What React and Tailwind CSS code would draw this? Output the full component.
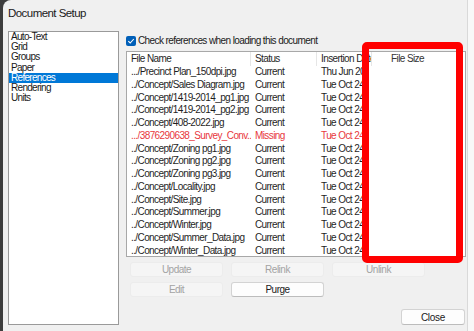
import React from "react";

const rows = [
  [".../Precinct Plan_150dpi.jpg", "Current", "Thu Jun 20"],
  ["../Concept/Sales Diagram.jpg", "Current", "Tue Oct 24"],
  ["../Concept/1419-2014_pg1.jpg", "Current", "Tue Oct 24"],
  ["../Concept/1419-2014_pg2.jpg", "Current", "Tue Oct 24"],
  ["../Concept/408-2022.jpg", "Current", "Tue Oct 24"],
  [".../3876290638_Survey_Conv...", "Missing", "Tue Oct 24", true],
  ["../Concept/Zoning pg1.jpg", "Current", "Tue Oct 24"],
  ["../Concept/Zoning pg2.jpg", "Current", "Tue Oct 24"],
  ["../Concept/Zoning pg3.jpg", "Current", "Tue Oct 24"],
  ["../Concept/Locality.jpg", "Current", "Tue Oct 24"],
  ["../Concept/Site.jpg", "Current", "Tue Oct 24"],
  ["../Concept/Summer.jpg", "Current", "Tue Oct 24"],
  ["../Concept/Winter.jpg", "Current", "Tue Oct 24"],
  ["../Concept/Summer_Data.jpg", "Current", "Tue Oct 24"],
  ["../Concept/Winter_Data.jpg", "Current", "Tue Oct 24"],
];

const pages = ["Auto-Text", "Grid", "Groups", "Paper", "References", "Rendering", "Units"];

const Btn = ({ label, enabled }) => (
  <div
    className={
      "w-[93px] h-[15px] rounded-[3px] flex items-center justify-center text-[10px] tracking-[-0.5px] " +
      (enabled
        ? "bg-[#fdfdfd] border border-[#d3d3d3] border-b-[#bcbcbc] text-[#1b1b1b]"
        : "bg-[#f5f5f5] border border-[#ececec] text-[#a3a3a3]")
    }
  >
    {label}
  </div>
);

const App = () => {
  return (
    <div
      className="relative w-[474px] h-[331px] overflow-hidden flex bg-[#3d3d3d]"
      style={{ fontFamily: '"Liberation Sans", Arial, sans-serif' }}
    >
      <div className="ml-[3px] w-[464px] h-full bg-[#f0f0f0] rounded-tl-[8px] flex flex-col">
        {/* title */}
        <div className="h-[31px] pl-[5px] pt-[6px] text-[11.5px] tracking-[-0.55px] text-[#1a1a1a] leading-[14px]">
          Document Setup
        </div>

        <div className="flex pl-[5px]">
          {/* page list */}
          <div className="w-[111px] h-[294px] bg-white border border-[#9a9a9a]">
            {pages.map((p) => (
              <div
                key={p}
                className={
                  "h-[10.2px] leading-[10.2px] pl-[2px] text-[10px] tracking-[-0.7px] " +
                  (p === "References" ? "bg-[#0078d7] text-white" : "text-[#1a1a1a]")
                }
              >
                {p}
              </div>
            ))}
          </div>

          {/* right side */}
          <div className="ml-[7px] w-[340px] h-[294px] flex flex-col">
            <div className="mt-[4px] h-[11px] flex items-center">
              <div className="w-[10px] h-[10px] rounded-[2px] bg-[#005fb8] flex items-center justify-center">
                <svg width="8" height="8" viewBox="0 0 8 8">
                  <path d="M1.3 4.2 L3.2 6 L6.8 2" fill="none" stroke="white" strokeWidth="1.1" />
                </svg>
              </div>
              <span className="ml-[2px] text-[10px] tracking-[-0.6px] text-[#1a1a1a]">
                Check references when loading this document
              </span>
            </div>

            {/* table */}
            <div className="mt-[5px] h-[206px] bg-white border border-[#a8a8a8] overflow-hidden text-[10px] tracking-[-0.6px] text-[#1f1f1f]">
              <div className="grid grid-cols-[124px_66px_55px_1fr] h-[14px] leading-[14px]">
                <div className="pl-[4px] border-r border-[#e6e6e6] whitespace-nowrap overflow-hidden">File Name</div>
                <div className="pl-[4px] border-r border-[#e6e6e6] whitespace-nowrap overflow-hidden">Status</div>
                <div className="pl-[4px] border-r border-[#e6e6e6] whitespace-nowrap overflow-hidden">Insertion Date</div>
                <div className="pl-[19px] whitespace-nowrap overflow-hidden text-[#333]">File Size</div>
              </div>
              {rows.map(([name, status, date, missing], i) => (
                <div
                  key={i}
                  className={
                    "grid grid-cols-[124px_66px_55px_1fr] h-[12.75px] leading-[12.75px] " +
                    (missing ? "text-[#e8383d]" : "")
                  }
                >
                  <div className="pl-[4px] whitespace-nowrap overflow-hidden">{name}</div>
                  <div className="pl-[4px] whitespace-nowrap overflow-hidden">{status}</div>
                  <div className="pl-[4px] whitespace-nowrap overflow-hidden">{date}</div>
                  <div></div>
                </div>
              ))}
            </div>

            {/* buttons */}
            <div className="mt-[5px] ml-[4px] flex gap-[8px]">
              <Btn label="Update" />
              <Btn label="Relink" />
              <Btn label="Unlink" />
            </div>
            <div className="mt-[5px] ml-[4px] flex gap-[8px]">
              <Btn label="Edit" />
              <Btn label="Purge" enabled />
            </div>

            <div className="mt-auto mr-[1px] flex justify-end">
              <div className="w-[64px] h-[16px] rounded-[3px] bg-[#fdfdfd] border border-[#d3d3d3] border-b-[#bcbcbc] flex items-center justify-center text-[10px] tracking-[-0.3px] text-[#1b1b1b]">
                Close
              </div>
            </div>
          </div>
        </div>
      </div>
      <div className="w-[7px] h-full bg-[#f8f8f8] border-l border-[#d9d9d9]"></div>

      {/* red highlight annotation */}
      <div className="absolute left-[362px] top-[42px] w-[101px] h-[221px] border-[7px] border-[#ff0000] rounded-[5px]"></div>
    </div>
  );
};

export default App;
